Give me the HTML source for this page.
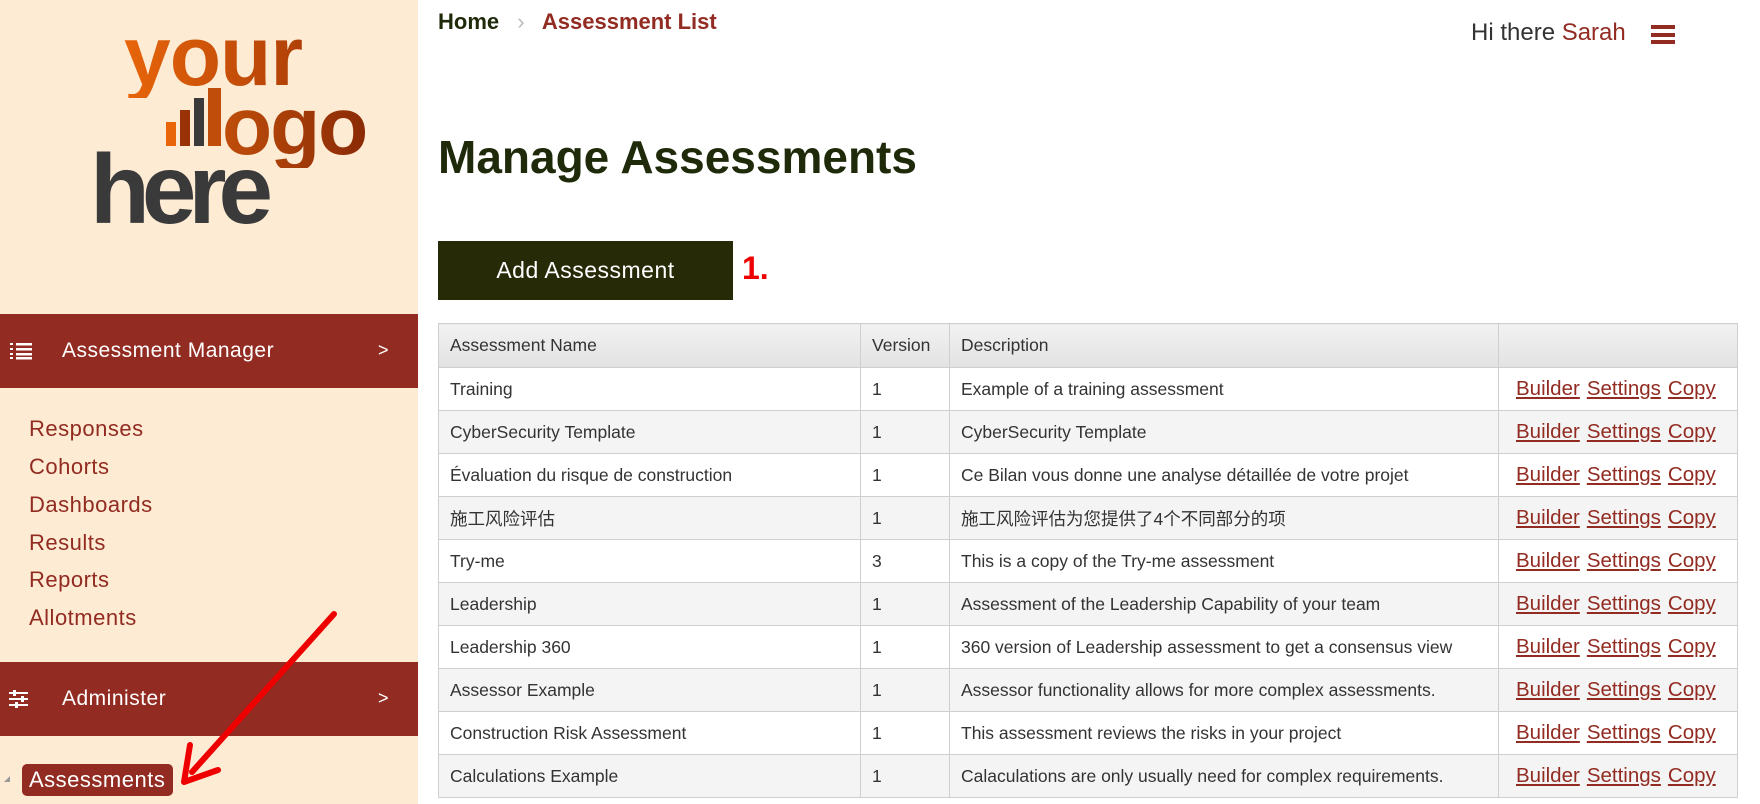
<!DOCTYPE html>
<html><head><meta charset="utf-8"><style>
*{margin:0;padding:0;box-sizing:border-box}
html,body{width:1760px;height:804px;overflow:hidden}
body{background:#fff;font-family:"Liberation Sans","Noto Sans CJK SC",sans-serif;position:relative}
.side{position:absolute;left:0;top:0;width:418px;height:804px;background:#fdebd3}
.bar{position:absolute;left:0;width:418px;height:74px;background:#922b21;color:#fff;font-size:21px;letter-spacing:.5px}
.bar .t{position:absolute;left:62px;top:25px}
.bar .c{position:absolute;left:378px;top:26px;font-size:18px}
.menu{position:absolute;left:29px;font-size:22px;color:#922b21;letter-spacing:.5px}
table{position:absolute;left:438px;top:323px;width:1300px;border-collapse:collapse;font-size:17.5px;color:#333}
td,th{border:1px solid #cfcfcf;height:43px;padding:0 11px;text-align:left;font-weight:normal;white-space:nowrap}
th{background:linear-gradient(#f2f2f2,#e2e2e2);height:44px}
tr:nth-child(odd) td{background:#f4f4f4}
td:last-child{padding-left:17px}
a{color:#922b21;text-decoration:underline;margin-right:7px;font-size:20.5px}
</style></head><body>
<div class="side">
 <div style="position:absolute;left:124px;top:14px;font:bold 84px/1 'Liberation Sans',sans-serif;letter-spacing:-1px;background:linear-gradient(90deg,#e8650a,#b04008);-webkit-background-clip:text;background-clip:text;color:transparent">your</div>
 <div style="position:absolute;left:166px;top:122px;width:10px;height:24px;background:#e8650a"></div>
 <div style="position:absolute;left:180px;top:110px;width:10px;height:36px;background:#9a3208"></div>
 <div style="position:absolute;left:194px;top:98px;width:10px;height:48px;background:#3a3a3a"></div>
 <div style="position:absolute;left:208px;top:88px;width:13px;height:58px;background:#c04e0a"></div>
 <div style="position:absolute;left:222px;top:86px;font:bold 82px/1 'Liberation Sans',sans-serif;letter-spacing:-2px;background:linear-gradient(90deg,#c04e0a,#8a2a06);-webkit-background-clip:text;background-clip:text;color:transparent">ogo</div>
 <div style="position:absolute;left:90px;top:140px;font:bold 98px/1 'Liberation Sans',sans-serif;letter-spacing:-8px;color:#3a3a3a">here</div>
 <div class="bar" style="top:314px">
  <svg style="position:absolute;left:10px;top:28px" width="22" height="18"><g fill="#fff"><rect x="6" y="1" width="16" height="2.5"/><rect x="6" y="6" width="16" height="2.5"/><rect x="6" y="11" width="16" height="2.5"/><rect x="6" y="15" width="16" height="2.5"/><rect x="0" y="1" width="3" height="2"/><rect x="0" y="6" width="3" height="2"/><rect x="0" y="11" width="3" height="2"/><rect x="0" y="15" width="3" height="2"/></g></svg>
  <span class="t">Assessment Manager</span><span class="c">&gt;</span></div>
 <div class="menu" style="top:416px">Responses</div>
 <div class="menu" style="top:454px">Cohorts</div>
 <div class="menu" style="top:492px">Dashboards</div>
 <div class="menu" style="top:530px">Results</div>
 <div class="menu" style="top:567px">Reports</div>
 <div class="menu" style="top:605px">Allotments</div>
 <div class="bar" style="top:662px">
  <svg style="position:absolute;left:9px;top:28px" width="20" height="18"><g fill="#fff"><rect x="0" y="2" width="19" height="2"/><rect x="0" y="8" width="19" height="2"/><rect x="0" y="14" width="19" height="2"/><rect x="4" y="0" width="3" height="6"/><rect x="12" y="6" width="3" height="6"/><rect x="6" y="12" width="3" height="6"/></g></svg>
  <span class="t">Administer</span><span class="c">&gt;</span></div>
 <div style="position:absolute;left:4px;top:776px;width:0;height:0;border-left:6px solid transparent;border-bottom:6px solid #999"></div>
 <div style="position:absolute;left:22px;top:764px;width:151px;height:32px;background:#922b21;border-radius:5px;color:#fff;font-size:22px;padding:3px 0 0 7px;letter-spacing:.5px">Assessments</div>
</div>
<svg style="position:absolute;left:0;top:0" width="420" height="804"><line x1="334" y1="614" x2="192" y2="772" stroke="#e00" stroke-width="6" stroke-linecap="round"/><polyline points="190,745 184,782 218,770" fill="none" stroke="#e00" stroke-width="6" stroke-linecap="round" stroke-linejoin="round"/></svg>
<div style="position:absolute;left:438px;top:9px;font-size:22px;font-weight:bold;color:#1f2a0a">Home <span style="color:#bbb;font-weight:normal;margin:0 12px">›</span> <span style="color:#922b21">Assessment List</span></div>
<div style="position:absolute;left:1471px;top:19px;font-size:24px;color:#333">Hi there <span style="color:#922b21">Sarah</span></div>
<div style="position:absolute;left:1651px;top:25px;width:24px;height:19px;border-top:4px solid #922b21;border-bottom:4px solid #922b21"><div style="margin-top:3.5px;height:4px;background:#922b21"></div></div>
<div style="position:absolute;left:438px;top:130px;font-size:46px;font-weight:bold;color:#1f2a0a">Manage Assessments</div>
<div style="position:absolute;left:438px;top:241px;width:295px;height:59px;background:#262a06;color:#fff;font-size:23px;text-align:center;line-height:59px;letter-spacing:.5px">Add Assessment</div>
<div style="position:absolute;left:742px;top:250px;font-size:32px;font-weight:bold;color:#e00">1.</div>
<table>
<tr><th style="width:422px">Assessment Name</th><th style="width:89px">Version</th><th style="width:549px">Description</th><th></th></tr>
<tr><td>Training</td><td>1</td><td>Example of a training assessment</td><td><a>Builder</a><a>Settings</a><a>Copy</a></td></tr>
<tr><td>CyberSecurity Template</td><td>1</td><td>CyberSecurity Template</td><td><a>Builder</a><a>Settings</a><a>Copy</a></td></tr>
<tr><td>Évaluation du risque de construction</td><td>1</td><td>Ce Bilan vous donne une analyse détaillée de votre projet</td><td><a>Builder</a><a>Settings</a><a>Copy</a></td></tr>
<tr><td>施工风险评估</td><td>1</td><td>施工风险评估为您提供了4个不同部分的项</td><td><a>Builder</a><a>Settings</a><a>Copy</a></td></tr>
<tr><td>Try-me</td><td>3</td><td>This is a copy of the Try-me assessment</td><td><a>Builder</a><a>Settings</a><a>Copy</a></td></tr>
<tr><td>Leadership</td><td>1</td><td>Assessment of the Leadership Capability of your team</td><td><a>Builder</a><a>Settings</a><a>Copy</a></td></tr>
<tr><td>Leadership 360</td><td>1</td><td>360 version of Leadership assessment to get a consensus view</td><td><a>Builder</a><a>Settings</a><a>Copy</a></td></tr>
<tr><td>Assessor Example</td><td>1</td><td>Assessor functionality allows for more complex assessments.</td><td><a>Builder</a><a>Settings</a><a>Copy</a></td></tr>
<tr><td>Construction Risk Assessment</td><td>1</td><td>This assessment reviews the risks in your project</td><td><a>Builder</a><a>Settings</a><a>Copy</a></td></tr>
<tr><td>Calculations Example</td><td>1</td><td>Calaculations are only usually need for complex requirements.</td><td><a>Builder</a><a>Settings</a><a>Copy</a></td></tr>
</table>
</body></html>
